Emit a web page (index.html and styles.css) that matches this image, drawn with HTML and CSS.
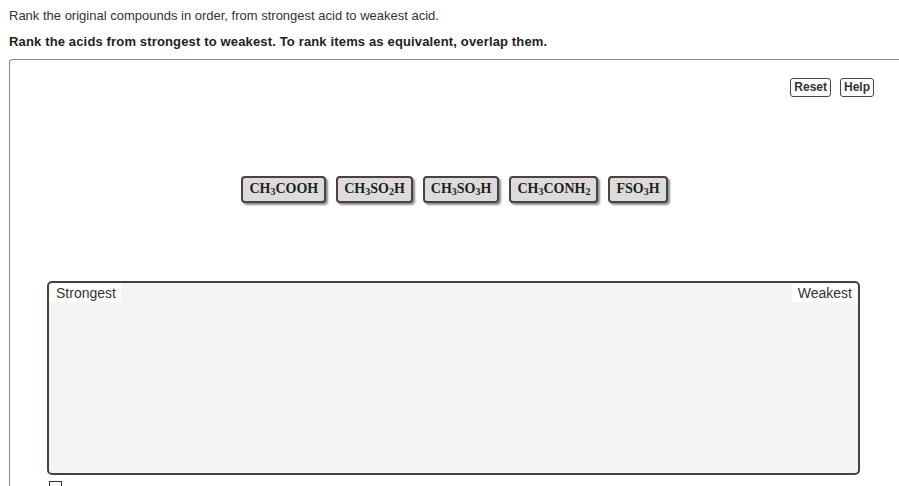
FILE: index.html
```html
<!DOCTYPE html>
<html>
<head>
<meta charset="utf-8">
<link rel="stylesheet" href="styles.css">
</head>
<body>
<p class="intro">Rank the original compounds in order, from strongest acid to weakest acid.</p>
<p class="task">Rank the acids from strongest to weakest. To rank items as equivalent, overlap them.</p>
<div class="panel">
  <div class="toolbar">
    <button class="btn">Reset</button>
    <button class="btn">Help</button>
  </div>
  <div class="chips">
    <div class="chip">CH<sub>3</sub>COOH</div>
    <div class="chip">CH<sub>3</sub>SO<sub>2</sub>H</div>
    <div class="chip">CH<sub>3</sub>SO<sub>3</sub>H</div>
    <div class="chip">CH<sub>3</sub>CONH<sub>2</sub></div>
    <div class="chip">FSO<sub>3</sub>H</div>
  </div>
  <div class="rankbox">
    <span class="label">Strongest</span>
    <span class="label">Weakest</span>
  </div>
  <div class="check"></div>
</div>
</body>
</html>
```
FILE: styles.css
```css
html, body {
  margin: 0;
  padding: 0;
  background: #fff;
  overflow: hidden;
}
body {
  font-family: "Liberation Sans", Arial, sans-serif;
  color: #333;
  width: 899px;
  height: 486px;
}
.intro {
  margin: 0;
  padding: 8px 0 0 9px;
  font-size: 13px;
  line-height: 15px;
}
.task {
  margin: 0;
  padding: 11px 0 0 9px;
  font-size: 13px;
  line-height: 16px;
  font-weight: bold;
  letter-spacing: 0.15px;
  color: #222;
}
.panel {
  margin: 9px 0 0 9px;
  border-top: 1px solid #8a8a8a;
  border-left: 1px solid #8a8a8a;
  border-top-left-radius: 4px;
  height: 440px;
}
.toolbar {
  display: flex;
  justify-content: flex-end;
  gap: 9px;
  padding: 18px 25px 0 0;
}
.btn {
  font-family: "Liberation Sans", Arial, sans-serif;
  font-size: 12px;
  font-weight: bold;
  color: #333;
  background: #fff;
  border: 1px solid #444;
  border-radius: 3px;
  height: 19px;
  padding: 0 3px;
  line-height: 15px;
}
.chips {
  display: flex;
  justify-content: center;
  gap: 10px;
  margin-top: 79px;
}
.chip {
  font-family: "Liberation Serif", "Times New Roman", serif;
  font-weight: bold;
  font-size: 14px;
  color: #1e1e1e;
  background: #dcdcdc;
  border: 2px solid #4d4040;
  border-radius: 4px;
  height: 23px;
  line-height: 22px;
  padding: 0 6px;
  box-shadow: 2px 2px 2px rgba(0, 0, 0, 0.45);
}
.chip sub {
  font-size: 10px;
  vertical-align: -2px;
  line-height: 0;
}
.rankbox {
  margin: 78px 0 0 37px;
  width: 807px;
  height: 189px;
  border: 2px solid #4a3f44;
  border-radius: 5px;
  background: #f4f4f4;
  display: flex;
  justify-content: space-between;
  align-items: flex-start;
  padding: 1px 1px 0 1px;
}
.label {
  background: #fff;
  font-size: 14px;
  line-height: 18px;
  color: #333;
  padding: 0 5px 0 6px;
}
.check {
  margin: 6px 0 0 39px;
  width: 11px;
  height: 11px;
  border: 1px solid #333;
  background: #fff;
}
```
